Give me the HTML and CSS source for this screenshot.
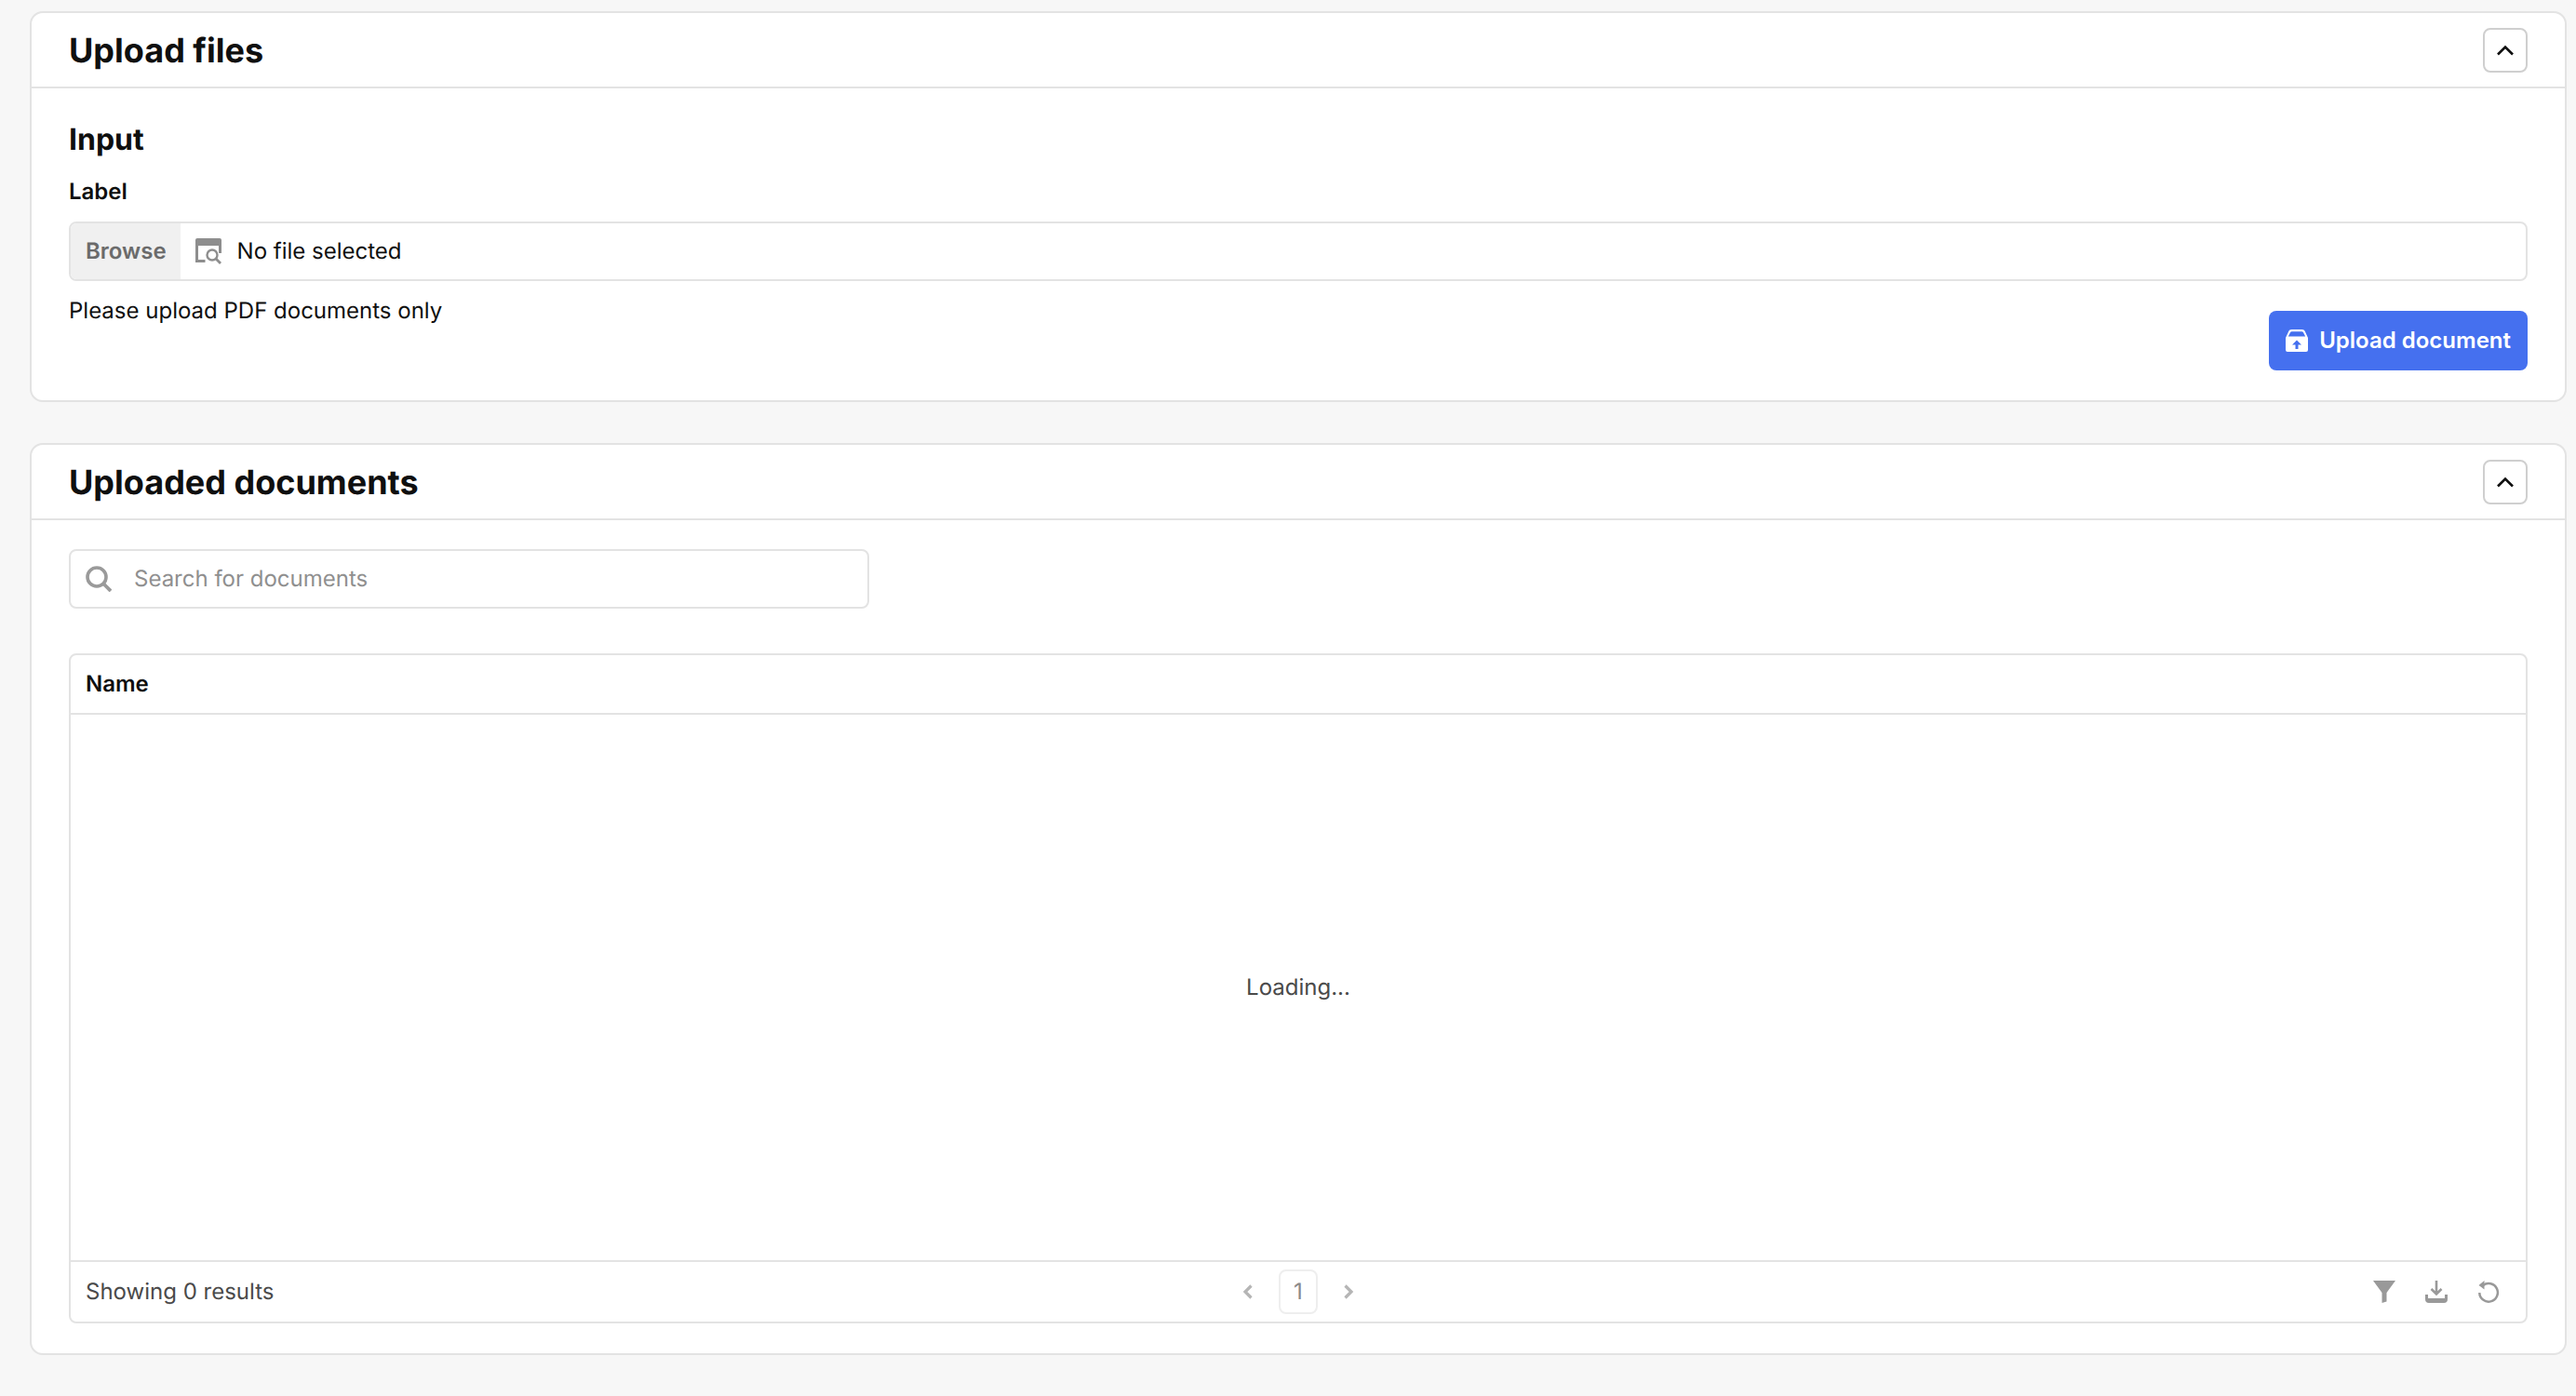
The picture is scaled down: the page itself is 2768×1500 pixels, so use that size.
FILE: index.html
```html
<!DOCTYPE html>
<html lang="en">
<head>
<meta charset="utf-8">
<title>Upload files</title>
<link rel="stylesheet" href="styles.css">
</head>
<body>
<main class="page">
  <section class="card">
    <header class="card-head">
      <h2 class="card-title">Upload files</h2>
      <button class="collapse" type="button" aria-label="Collapse">
        <svg class="collapse-icon" viewBox="0 0 20 12"><path d="M2 10.500 10 2.500l8 8" fill="none" stroke="#0f0f0f" stroke-width="2.600"/></svg>
      </button>
    </header>
    <div class="card-body upload-body">
      <h3 class="section-title">Input</h3>
      <div class="field-label">Label</div>
      <div class="file-input">
        <span class="browse">Browse</span>
        <svg class="file-icon" viewBox="0 0 28 28">
          <path d="M2 0h24a2 2 0 0 1 2 2v6H0V2a2 2 0 0 1 2-2z" fill="#8e8e8e"/>
          <path d="M1.500 8v16.500h9M26.500 8v8" fill="none" stroke="#8e8e8e" stroke-width="3"/>
          <circle cx="18" cy="18" r="5.500" fill="none" stroke="#8e8e8e" stroke-width="2.400"/>
          <path d="M22 22l5 5" stroke="#8e8e8e" stroke-width="2.800"/>
        </svg>
        <span class="file-name">No file selected</span>
      </div>
      <div class="upload-foot">
        <p class="help">Please upload PDF documents only</p>
        <button class="primary" type="button">
          <svg class="primary-icon" viewBox="0 0 24 24">
            <path fill-rule="evenodd" fill="#fff" d="M6.500 0h11c1.600 0 2.700.8 3.400 2.200L24 9v13a2 2 0 0 1-2 2H2a2 2 0 0 1-2-2V9l3.100-6.800C3.800.8 4.900 0 6.500 0zM6.700 2.200c-.8 0-1.300.4-1.700 1L2.800 7.400h18.400L19 3.200c-.4-.6-.9-1-1.700-1zM12 11.500l-5 5h3.500V21h3v-4.500H17z"/>
          </svg>
          <span>Upload document</span>
        </button>
      </div>
    </div>
  </section>

  <section class="card">
    <header class="card-head">
      <h2 class="card-title">Uploaded documents</h2>
      <button class="collapse" type="button" aria-label="Collapse">
        <svg class="collapse-icon" viewBox="0 0 20 12"><path d="M2 10.500 10 2.500l8 8" fill="none" stroke="#0f0f0f" stroke-width="2.600"/></svg>
      </button>
    </header>
    <div class="card-body docs-body">
      <label class="search">
        <svg class="search-icon" viewBox="0 0 28 28">
          <circle cx="12" cy="12" r="10" fill="none" stroke="#9a9a9a" stroke-width="3.600"/>
          <path d="M19.500 19.500 27 27" stroke="#9a9a9a" stroke-width="3.800"/>
        </svg>
        <span class="search-text">Search for documents</span>
      </label>
      <div class="table">
        <div class="table-head">Name</div>
        <div class="table-body">Loading...</div>
        <div class="table-foot">
          <span class="results">Showing 0 results</span>
          <nav class="pager">
            <svg class="pager-arrow" viewBox="0 0 16 16"><path d="M11.500 1.500 5 8l6.500 6.500" fill="none" stroke="#b5b5b5" stroke-width="3.200"/></svg>
            <span class="page-num">1</span>
            <svg class="pager-arrow" viewBox="0 0 16 16"><path d="M4.500 1.500 11 8l-6.500 6.500" fill="none" stroke="#b5b5b5" stroke-width="3.200"/></svg>
          </nav>
          <div class="tools">
            <svg class="tool" viewBox="0 0 24 24"><path d="M0 0h24L14.500 13v9.500L9.500 24V13z" fill="#999"/></svg>
            <svg class="tool" viewBox="0 0 24 24">
              <path d="M12 0v14M6.500 9l5.500 5.500L17.500 9" fill="none" stroke="#999" stroke-width="2.600"/>
              <path d="M1.500 15v5a2.500 2.500 0 0 0 2.500 2.500h16a2.500 2.500 0 0 0 2.500-2.500v-5" fill="none" stroke="#999" stroke-width="3"/>
              <path d="M1 19h22v4H1z" fill="#999"/>
            </svg>
            <svg class="tool" viewBox="0 0 24 24">
              <path d="M6 5.200a9.800 9.800 0 1 1-3.700 7.800" fill="none" stroke="#999" stroke-width="2.500"/>
              <path d="M7.500 0v9.500L1.500 5z" fill="#999"/>
            </svg>
          </div>
        </div>
      </div>
    </div>
  </section>
</main>
</body>
</html>
```

FILE: styles.css
```css
* { box-sizing: border-box; }

html, body { margin: 0; padding: 0; }

body {
  background: #f7f7f7;
  color: #0f0f0f;
  font-family: Inter, "Liberation Sans", sans-serif;
  font-size: 24px;
  line-height: 32px;
  min-height: 1500px;
  text-rendering: geometricPrecision;
}

.page {
  display: flex;
  flex-direction: column;
  gap: 44px;
  padding: 12px 10px 0 32px;
}

.card {
  background: #fff;
  border: 2px solid #e3e3e3;
  border-radius: 14px;
}

.card-head {
  display: flex;
  align-items: center;
  justify-content: space-between;
  height: 81px;
  padding: 0 40px;
  border-bottom: 2px solid #e3e3e3;
}

.card-title {
  margin: 0;
  font-size: 36px;
  line-height: 44px;
  font-weight: 700;
}

.collapse {
  display: flex;
  align-items: center;
  justify-content: center;
  width: 48px;
  height: 48px;
  padding: 0;
  background: #fff;
  border: 2px solid #cfcfcf;
  border-radius: 8px;
}

.collapse-icon { width: 20px; height: 12px; }

.card-body { padding: 0 40px; }

.upload-body { padding-top: 33px; padding-bottom: 32px; }

.section-title {
  margin: 0;
  font-size: 32px;
  line-height: 44px;
  font-weight: 700;
}

.field-label {
  margin-top: 18px;
  font-weight: 600;
}

.file-input {
  display: flex;
  align-items: center;
  height: 64px;
  margin-top: 16px;
  border: 2px solid #e3e3e3;
  border-radius: 8px;
  overflow: hidden;
}

.browse {
  display: flex;
  align-items: center;
  align-self: stretch;
  padding: 0 15px 0 16px;
  background: #f0f0f0;
  color: #6b6b6b;
  font-weight: 600;
}

.file-icon { width: 28px; height: 28px; margin-left: 16px; }

.file-name { margin-left: 17px; }

.upload-foot {
  display: flex;
  align-items: flex-start;
  justify-content: space-between;
}

.help { margin: 16px 0 0; }

.primary {
  display: flex;
  align-items: center;
  gap: 12px;
  height: 64px;
  margin-top: 32px;
  padding: 0 18px;
  background: #4570ef;
  color: #fff;
  border: 0;
  border-radius: 8px;
  font: 600 24px/32px Inter, "Liberation Sans", sans-serif;
}

.primary-icon { width: 24px; height: 24px; }

.docs-body { padding-top: 31px; padding-bottom: 32px; }

.search {
  display: flex;
  align-items: center;
  width: 860px;
  height: 64px;
  padding-left: 16px;
  border: 2px solid #e3e3e3;
  border-radius: 8px;
}

.search-icon { width: 28px; height: 28px; }

.search-text { margin-left: 24px; color: #8f8f8f; }

.table {
  display: flex;
  flex-direction: column;
  height: 720px;
  margin-top: 48px;
  border: 2px solid #e3e3e3;
  border-radius: 8px;
}

.table-head {
  display: flex;
  align-items: center;
  height: 64px;
  padding: 0 16px;
  border-bottom: 2px solid #e3e3e3;
  font-weight: 600;
}

.table-body {
  display: flex;
  align-items: center;
  justify-content: center;
  flex: 1;
  color: #4a4a4a;
}

.table-foot {
  display: grid;
  grid-template-columns: 1fr auto 1fr;
  align-items: center;
  height: 66px;
  padding: 0 16px;
  border-top: 2px solid #e3e3e3;
}

.results { color: #4a4a4a; }

.pager {
  display: flex;
  align-items: center;
  gap: 25px;
}

.pager-arrow { width: 16px; height: 16px; }

.page-num {
  display: flex;
  align-items: center;
  justify-content: center;
  width: 42px;
  height: 48px;
  border: 2px solid #eee;
  border-radius: 8px;
  color: #8a8a8a;
}

.tools {
  display: flex;
  justify-content: flex-end;
  gap: 32px;
  margin-right: 12px;
}

.tool { width: 24px; height: 24px; }
```
